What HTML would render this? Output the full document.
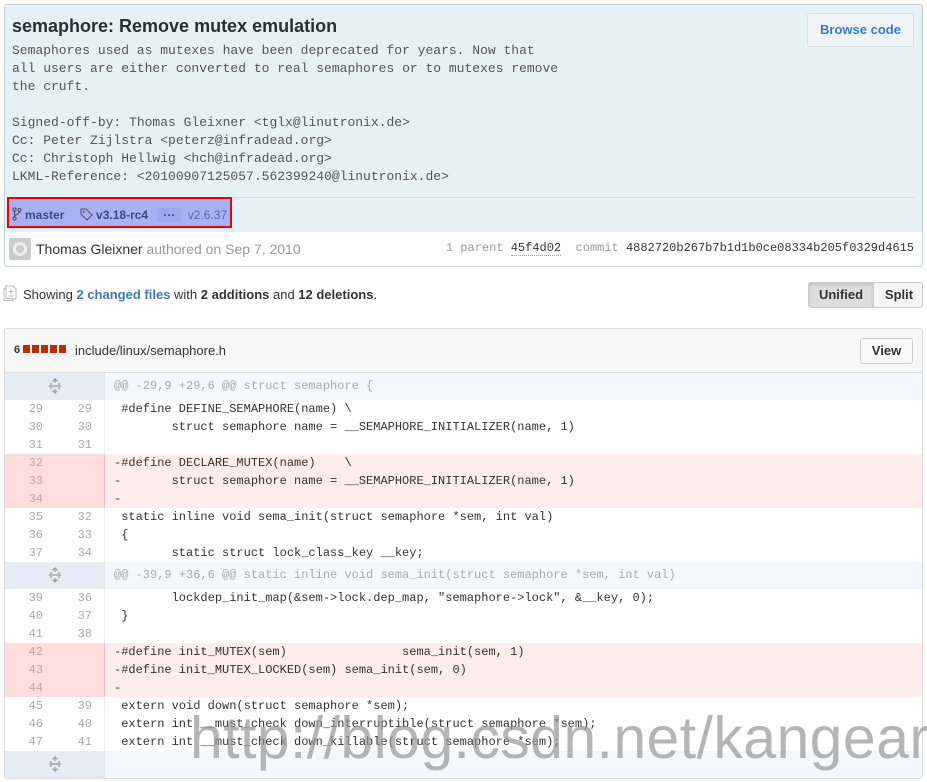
<!DOCTYPE html>
<html><head><meta charset="utf-8"><style>
*{margin:0;padding:0;box-sizing:border-box}
body{width:927px;height:782px;overflow:hidden;background:#fff;font-family:"Liberation Sans",sans-serif;position:relative;color:#333}
.abs{position:absolute}
.mono{font-family:"Liberation Mono",monospace}
.commit{left:4px;top:4px;width:919px;height:263px;border:1px solid #c5d5dd;border-radius:3px;overflow:hidden}
.top{position:absolute;left:0;top:0;width:100%;height:227px;background:#e6f1f6}
.title{left:7px;top:11px;font-size:18px;font-weight:bold;color:#253137}
.msg{left:7px;top:37px;font-size:13px;line-height:18px;color:#555;white-space:pre}
.btn{border:1px solid #d5dde2;border-radius:3px;background:#eef4f7;font-weight:bold;font-size:13px}
.diff{left:4px;top:328px;width:919px;height:451px;border:1px solid #ddd;border-radius:3px;overflow:hidden}
.row{position:absolute;left:0;width:917px;height:18px;font-family:"Liberation Mono",monospace;font-size:12px;line-height:18px}
.n1,.n2{position:absolute;top:0;width:50px;height:100%;text-align:right;color:#aaa;padding-right:12px}
.n1{left:0}.n2{left:50px;border-right:1px solid #eee}
.c{position:absolute;left:109px;top:0;white-space:pre;color:#333}
.del{background:#ffecec}.del .n1,.del .n2{background:#ffdddd;border-color:#f1c0c0;color:#c9a0a0}
.hunk{background:#f4f7fb;height:27px;line-height:27px}
.hunk .n1{width:100px;background:#e6ecf3;border-right:1px solid #dde4ec;text-align:center;padding:0;color:#999}
.hunk .n1 svg{position:absolute;left:42px;top:5px}
.hunk .n2{display:none}
.hunk .c{color:#aaa}
</style></head><body>
<div class="abs commit">
 <div class="top"></div>
 <div class="abs title">semaphore: Remove mutex emulation</div>
 <div class="abs mono msg">Semaphores used as mutexes have been deprecated for years. Now that
all users are either converted to real semaphores or to mutexes remove
the cruft.

Signed-off-by: Thomas Gleixner &lt;tglx@linutronix.de&gt;
Cc: Peter Zijlstra &lt;peterz@infradead.org&gt;
Cc: Christoph Hellwig &lt;hch@infradead.org&gt;
LKML-Reference: &lt;20100907125057.562399240@linutronix.de&gt;</div>
 <div class="abs btn" style="left:802px;top:8px;width:107px;height:34px;line-height:32px;text-align:center;color:#4078c0">Browse code</div>
 <div class="abs" style="left:4px;top:192px;width:906px;height:1px;background:#d2dee4"></div>
 <div class="abs" style="left:2px;top:192px;width:225px;height:31px;border:2px solid #e00;background:#aab0f6"></div>
 <div class="abs" style="left:7px;top:202px;font-size:12px;font-weight:bold;color:#3a4a80;white-space:nowrap">
  <svg width="10" height="14" viewBox="0 0 10 14" style="vertical-align:-2px"><circle cx="2.5" cy="2.5" r="1.6" fill="none" stroke="#445" stroke-width="1"/><circle cx="2.5" cy="11.5" r="1.6" fill="none" stroke="#445" stroke-width="1"/><circle cx="7.5" cy="3" r="1.6" fill="none" stroke="#445" stroke-width="1"/><path d="M2.5 4v6M7.5 4.6c0 3-5 2.5-5 5" fill="none" stroke="#445"/></svg><span style="margin-left:3px">master</span>
  <span style="margin-left:12px">
  <svg width="13" height="13" viewBox="0 0 13 13" style="vertical-align:-2px"><path d="M1 1h5l6 6-5 5-6-6z" fill="none" stroke="#556" stroke-width="1.1"/><circle cx="3.7" cy="3.7" r="1" fill="#556"/></svg> v3.18-rc4</span>
  <span style="margin-left:6px;background:#a0a6ee;padding:0 6px">···</span>
  <span style="font-weight:normal;color:#5a66a8;margin-left:3px">v2.6.37</span>
 </div>
 <div class="abs" style="left:4px;top:233px;width:22px;height:22px;background:#ccc;border-radius:2px"><svg width="22" height="22" viewBox="0 0 22 22"><circle cx="11" cy="11" r="7" fill="#eee"/><circle cx="11" cy="11" r="4" fill="#ccc"/></svg></div>
 <div class="abs" style="left:31px;top:236px;font-size:14px;color:#333">Thomas Gleixner <span style="color:#999">authored on Sep 7, 2010</span></div>
 <div class="abs mono" style="right:8px;top:236px;font-size:12px;color:#999">1 parent <span style="color:#333;border-bottom:1px dotted #999">45f4d02</span>&nbsp;&nbsp;commit <span style="color:#333">4882720b267b7b1d1b0ce08334b205f0329d4615</span></div>
</div>
<svg class="abs" style="left:3px;top:285px" width="14" height="16" viewBox="0 0 14 16"><path d="M1 3.5h2M1 3.5v12h9v-2M3 1h7l3 3v9.5H3z" fill="none" stroke="#bbb"/><path d="M8 4v5M5.5 6.5h5M5.5 11h5" stroke="#bbb"/></svg>
<div class="abs" style="left:23px;top:287px;font-size:13px;color:#333">Showing <b style="color:#4078c0">2 changed files</b> with <b>2 additions</b> and <b>12 deletions</b>.</div>
<div class="abs" style="left:808px;top:282px;width:115px;height:26px;border:1px solid #ccc;border-radius:3px;font-size:13px;font-weight:bold;line-height:24px;overflow:hidden">
 <div class="abs" style="left:0;top:0;width:65px;height:24px;background:#ddd;text-align:center;border-right:1px solid #ccc;box-shadow:inset 0 2px 3px rgba(0,0,0,.12)">Unified</div>
 <div class="abs" style="left:65px;top:0;width:50px;height:24px;background:#f5f5f5;text-align:center">Split</div>
</div>
<div class="abs diff">
 <div class="abs" style="left:0;top:0;width:100%;height:44px;background:#f7f7f7;border-bottom:1px solid #ddd"></div>
 <div class="abs" style="left:9px;top:15px;font-size:11px;font-weight:bold;color:#333">6 <span style="display:inline-block;width:44px;height:8px;background:repeating-linear-gradient(90deg,#bd2c00 0 7px,transparent 7px 9px)"></span></div>
 <div class="abs" style="left:70px;top:14px;font-size:13px">include/linux/semaphore.h</div>
 <div class="abs" style="left:855px;top:9px;width:53px;height:26px;border:1px solid #ccc;border-radius:3px;background:#f8f8f8;font-size:13px;font-weight:bold;text-align:center;line-height:24px">View</div>

 <div class="row hunk" style="top:44px"><div class="n1"><svg width="16" height="16" viewBox="0 0 16 16"><path d="M8 1v4M5.5 3.5L8 1l2.5 2.5M8 15v-4M5.5 12.5L8 15l2.5-2.5M2 8h12M3 6h2M11 6h2M3 10h2M11 10h2" fill="none" stroke="#999" stroke-width="1.2"/></svg></div><div class="c">@@ -29,9 +29,6 @@ struct semaphore {</div></div>
 <div class="row" style="top:71px"><div class="n1">29</div><div class="n2">29</div><div class="c"> #define DEFINE_SEMAPHORE(name) \</div></div>
 <div class="row" style="top:89px"><div class="n1">30</div><div class="n2">30</div><div class="c">        struct semaphore name = __SEMAPHORE_INITIALIZER(name, 1)</div></div>
 <div class="row" style="top:107px"><div class="n1">31</div><div class="n2">31</div><div class="c"> </div></div>
 <div class="row del" style="top:125px"><div class="n1">32</div><div class="n2"></div><div class="c">-#define DECLARE_MUTEX(name)    \</div></div>
 <div class="row del" style="top:143px"><div class="n1">33</div><div class="n2"></div><div class="c">-       struct semaphore name = __SEMAPHORE_INITIALIZER(name, 1)</div></div>
 <div class="row del" style="top:161px"><div class="n1">34</div><div class="n2"></div><div class="c">-</div></div>
 <div class="row" style="top:179px"><div class="n1">35</div><div class="n2">32</div><div class="c"> static inline void sema_init(struct semaphore *sem, int val)</div></div>
 <div class="row" style="top:197px"><div class="n1">36</div><div class="n2">33</div><div class="c"> {</div></div>
 <div class="row" style="top:215px"><div class="n1">37</div><div class="n2">34</div><div class="c">        static struct lock_class_key __key;</div></div>
 <div class="row hunk" style="top:233px"><div class="n1"><svg width="16" height="16" viewBox="0 0 16 16"><path d="M8 1v4M5.5 3.5L8 1l2.5 2.5M8 15v-4M5.5 12.5L8 15l2.5-2.5M2 8h12M3 6h2M11 6h2M3 10h2M11 10h2" fill="none" stroke="#999" stroke-width="1.2"/></svg></div><div class="c">@@ -39,9 +36,6 @@ static inline void sema_init(struct semaphore *sem, int val)</div></div>
 <div class="row" style="top:260px"><div class="n1">39</div><div class="n2">36</div><div class="c">        lockdep_init_map(&amp;sem-&gt;lock.dep_map, "semaphore-&gt;lock", &amp;__key, 0);</div></div>
 <div class="row" style="top:278px"><div class="n1">40</div><div class="n2">37</div><div class="c"> }</div></div>
 <div class="row" style="top:296px"><div class="n1">41</div><div class="n2">38</div><div class="c"> </div></div>
 <div class="row del" style="top:314px"><div class="n1">42</div><div class="n2"></div><div class="c">-#define init_MUTEX(sem)                sema_init(sem, 1)</div></div>
 <div class="row del" style="top:332px"><div class="n1">43</div><div class="n2"></div><div class="c">-#define init_MUTEX_LOCKED(sem) sema_init(sem, 0)</div></div>
 <div class="row del" style="top:350px"><div class="n1">44</div><div class="n2"></div><div class="c">-</div></div>
 <div class="row" style="top:368px"><div class="n1">45</div><div class="n2">39</div><div class="c"> extern void down(struct semaphore *sem);</div></div>
 <div class="row" style="top:386px"><div class="n1">46</div><div class="n2">40</div><div class="c"> extern int __must_check down_interruptible(struct semaphore *sem);</div></div>
 <div class="row" style="top:404px"><div class="n1">47</div><div class="n2">41</div><div class="c"> extern int __must_check down_killable(struct semaphore *sem);</div></div>
 <div class="row hunk" style="top:422px"><div class="n1"><svg width="16" height="16" viewBox="0 0 16 16"><path d="M8 1v4M5.5 3.5L8 1l2.5 2.5M8 15v-4M5.5 12.5L8 15l2.5-2.5M2 8h12M3 6h2M11 6h2M3 10h2M11 10h2" fill="none" stroke="#999" stroke-width="1.2"/></svg></div><div class="c"></div></div>
</div>
<div class="abs" style="left:190px;top:704px;font-size:59px;color:rgba(150,150,150,.7);white-space:nowrap;letter-spacing:0.4px">http://blog.csdn.net/kangear</div>
</body></html>
